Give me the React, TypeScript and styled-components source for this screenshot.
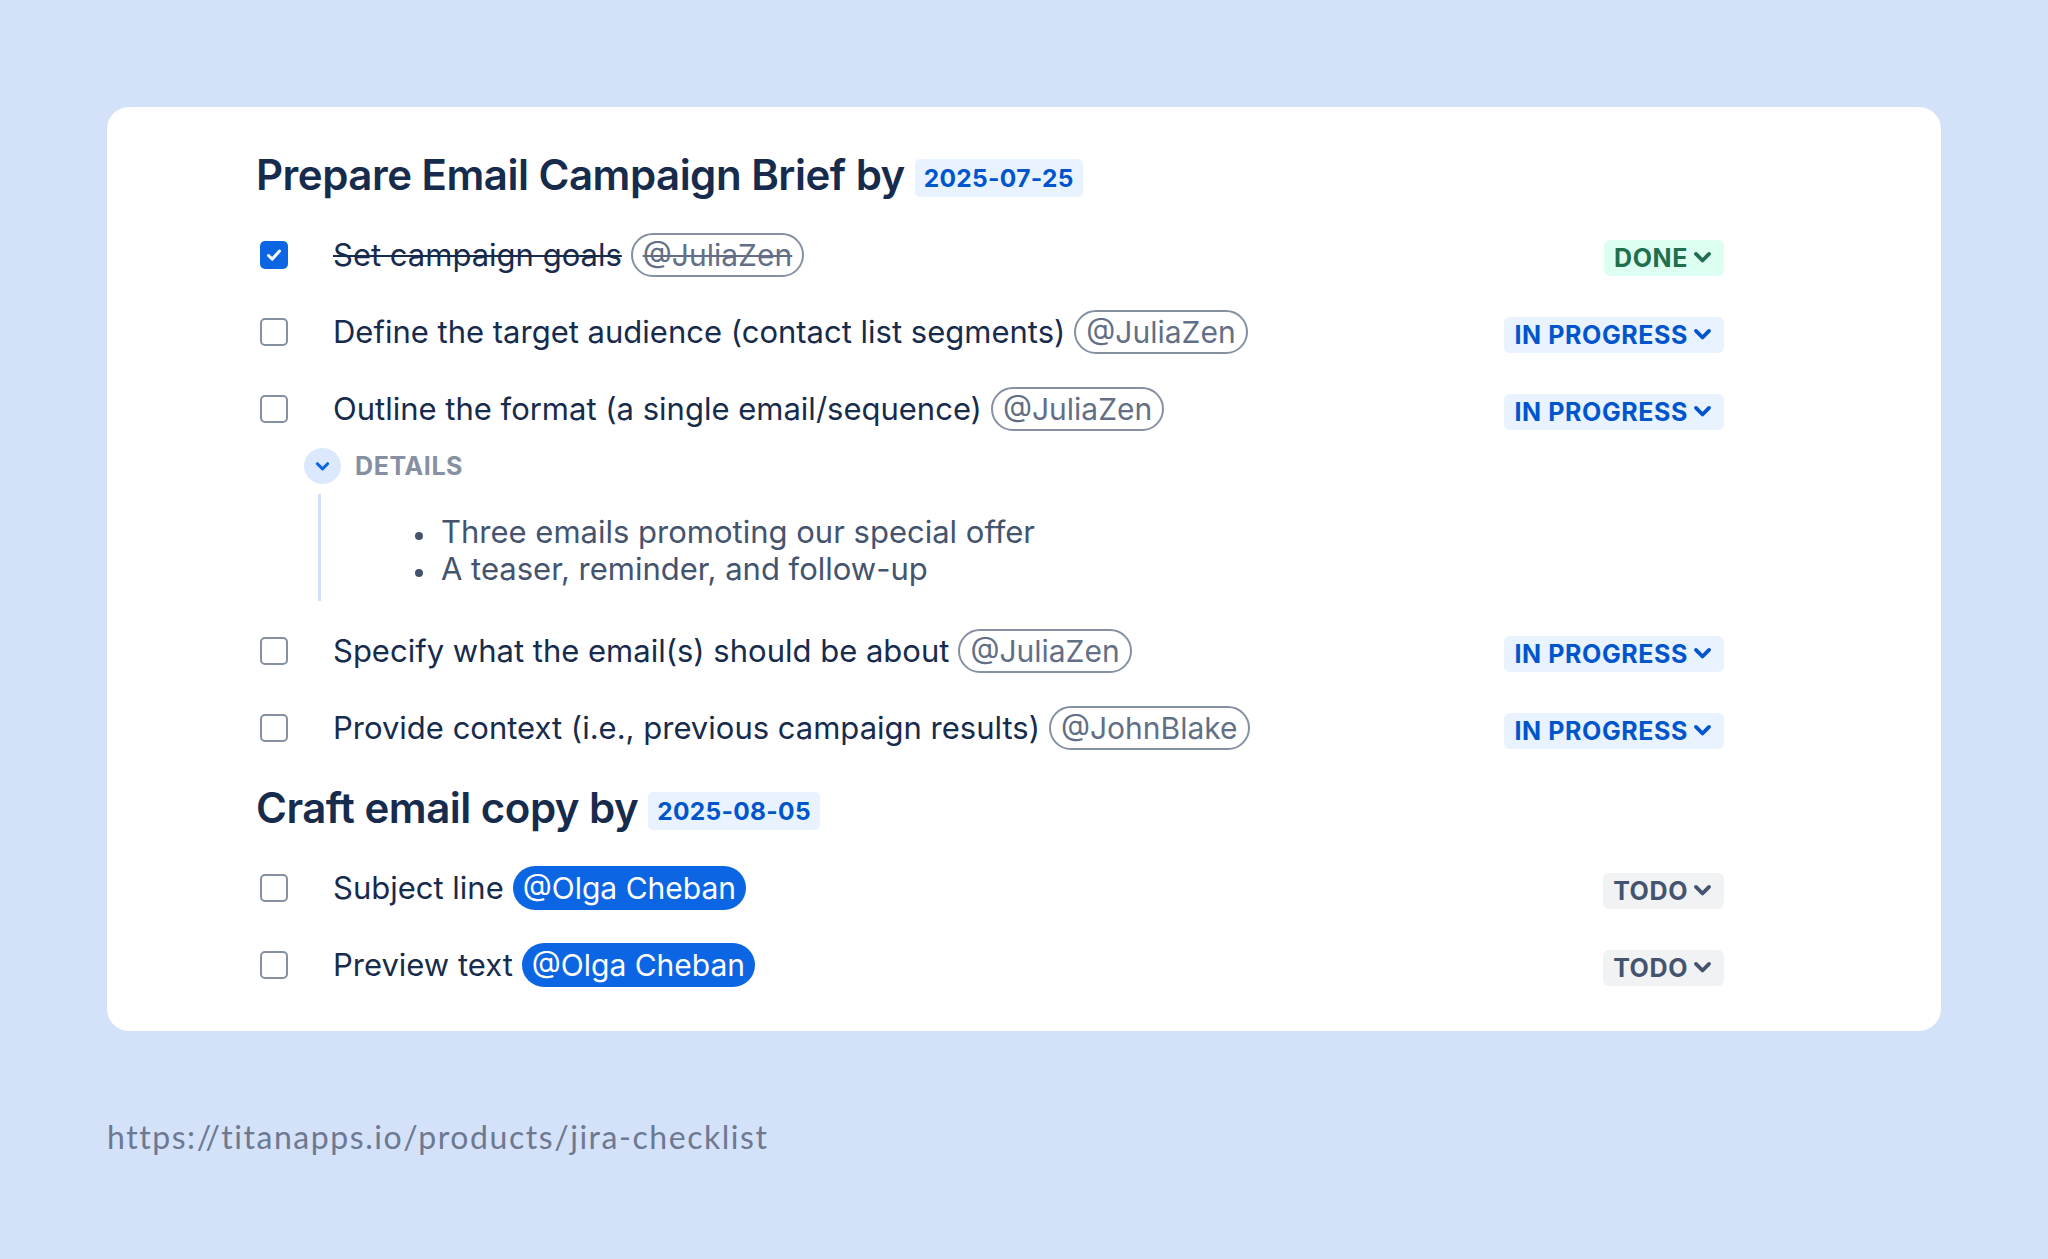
import React from 'react';
import styled, { createGlobalStyle } from 'styled-components';

const GlobalStyle = createGlobalStyle`
  html, body {
    margin: 0;
    padding: 0;
    background: #d3e2f8;
  }
  body {
    font-family: Inter, "Noto Sans", sans-serif;
    -webkit-font-smoothing: antialiased;
  }
`;

const Page = styled.div`
  min-height: 1259px;
  padding: 107px 107px 0 107px;
  box-sizing: border-box;
`;

const Card = styled.div`
  width: 1834px;
  box-sizing: border-box;
  background: #ffffff;
  border-radius: 22px;
  padding: 39px 217px 28px 149px;
  display: flex;
  flex-direction: column;
`;

const Heading = styled.h2<{ $first?: boolean }>`
  margin: ${(p) => (p.$first ? '0' : '13px')} 0 14px 0;
  height: 56px;
  display: flex;
  align-items: center;
  gap: 10px;
  font-size: 42px;
  font-weight: 600;
  letter-spacing: -0.5px;
  color: #172b4d;
`;

const DateLozenge = styled.span`
  display: inline-flex;
  align-items: center;
  height: 38px;
  padding: 0 9px;
  margin-top: 8px;
  border-radius: 5px;
  background: #e9f2ff;
  color: #0055cc;
  font-size: 24.5px;
  font-weight: 700;
  letter-spacing: 0.3px;
`;

const Row = styled.div`
  height: 77px;
  display: flex;
  align-items: center;
`;

const Box = styled.span<{ $checked?: boolean }>`
  flex: none;
  width: 28px;
  height: 28px;
  box-sizing: border-box;
  margin-left: 4px;
  margin-right: 45px;
  border-radius: 5px;
  display: flex;
  align-items: center;
  justify-content: center;
  border: ${(p) => (p.$checked ? 'none' : '2px solid #8590a2')};
  background: ${(p) => (p.$checked ? '#0c66e4' : '#ffffff')};
`;

const Label = styled.span<{ $done?: boolean }>`
  display: flex;
  align-items: center;
  gap: 9px;
  font-size: 31px;
  color: #172b4d;
  text-decoration: ${(p) => (p.$done ? 'line-through' : 'none')};
  text-decoration-thickness: 2px;
  white-space: nowrap;
`;

const Mention = styled.span<{ $self?: boolean; $done?: boolean }>`
  display: inline-flex;
  align-items: center;
  height: 44px;
  box-sizing: border-box;
  padding: 0 10px;
  border-radius: 22px;
  font-size: 30px;
  border: ${(p) => (p.$self ? 'none' : '2px solid #8590a2')};
  background: ${(p) => (p.$self ? '#0c66e4' : 'transparent')};
  color: ${(p) => (p.$self ? '#ffffff' : '#626f86')};
  text-decoration: ${(p) => (p.$done ? 'line-through' : 'none')};
  text-decoration-thickness: 2px;
`;

const statusColors = {
  done: { bg: '#dcfff1', fg: '#216e4e' },
  progress: { bg: '#e9f2ff', fg: '#0055cc' },
  todo: { bg: '#f1f2f4', fg: '#44546f' },
};

type StatusKind = keyof typeof statusColors;

const Status = styled.span<{ $kind: StatusKind }>`
  margin-left: auto;
  display: inline-flex;
  align-items: center;
  gap: 5px;
  height: 36px;
  padding: 0 12px 0 10px;
  border-radius: 6px;
  background: ${(p) => statusColors[p.$kind].bg};
  color: ${(p) => statusColors[p.$kind].fg};
  font-size: 25px;
  font-weight: 700;
  letter-spacing: 0.6px;
  margin-top: 6px;
`;

const Details = styled.div`
  margin-left: 48px;
  display: flex;
  flex-direction: column;
  margin-bottom: 11px;
`;

const DetailsHead = styled.div`
  height: 36px;
  display: flex;
  align-items: center;
  gap: 14px;
  margin-top: 1px;
  color: #8590a2;
  font-size: 25px;
  font-weight: 700;
  letter-spacing: 0.6px;
`;

const Toggle = styled.span`
  width: 37px;
  height: 36px;
  border-radius: 50%;
  background: #dbe8fd;
  display: flex;
  align-items: center;
  justify-content: center;
`;

const DetailsBody = styled.div`
  margin-top: 10px;
  margin-left: 14px;
  border-left: 3px solid #cfe1fd;
  padding: 19px 0 14px 0;
`;

const Bullets = styled.ul`
  margin: 0;
  padding-left: 116px;
  color: #44546f;
  font-size: 31px;
  line-height: 37px;
  li::marker {
    font-size: 24px;
  }
  li {
    padding-left: 4px;
  }
`;

const Url = styled.div`
  margin-top: 86px;
  font-family: Lato, "Open Sans", sans-serif;
  font-size: 32px;
  letter-spacing: 1.55px;
  color: #6e7891;
`;

const Chevron = ({ color, size = 16 }: { color: string; size?: number }) => (
  <svg width={size} height={size} viewBox="0 0 16 16" fill="none">
    <path d="M2.5 5l5.5 5.5L13.5 5" stroke={color} strokeWidth="3.2" strokeLinecap="round" strokeLinejoin="round" />
  </svg>
);

const Check = () => (
  <svg width="18" height="18" viewBox="0 0 18 18" fill="none">
    <path d="M3.5 9.5l3.8 3.6L14.5 5" stroke="#fff" strokeWidth="3" strokeLinecap="round" strokeLinejoin="round" />
  </svg>
);

const statusText: Record<StatusKind, string> = {
  done: 'DONE',
  progress: 'IN PROGRESS',
  todo: 'TODO',
};

type Item = {
  text: string;
  who: string;
  self?: boolean;
  status: StatusKind;
  done?: boolean;
  details?: string[];
};

const ItemRow = ({ item }: { item: Item }) => (
  <Row>
    <Box $checked={item.done}>{item.done && <Check />}</Box>
    <Label $done={item.done}>
      {item.text}
      <Mention $self={item.self} $done={item.done}>{item.who}</Mention>
    </Label>
    <Status $kind={item.status}>
      {statusText[item.status]}
      <Chevron color={statusColors[item.status].fg} size={19} />
    </Status>
  </Row>
);

const brief: Item[] = [
  { text: 'Set campaign goals', who: '@JuliaZen', status: 'done', done: true },
  { text: 'Define the target audience (contact list segments)', who: '@JuliaZen', status: 'progress' },
  {
    text: 'Outline the format (a single email/sequence)',
    who: '@JuliaZen',
    status: 'progress',
    details: ['Three emails promoting our special offer', 'A teaser, reminder, and follow-up'],
  },
  { text: 'Specify what the email(s) should be about', who: '@JuliaZen', status: 'progress' },
  { text: 'Provide context (i.e., previous campaign results)', who: '@JohnBlake', status: 'progress' },
];

const copy: Item[] = [
  { text: 'Subject line', who: '@Olga Cheban', self: true, status: 'todo' },
  { text: 'Preview text', who: '@Olga Cheban', self: true, status: 'todo' },
];

const renderItems = (items: Item[]) =>
  items.map((item) => (
    <React.Fragment key={item.text}>
      <ItemRow item={item} />
      {item.details && (
        <Details>
          <DetailsHead>
            <Toggle>
              <Chevron color="#0c66e4" size={15} />
            </Toggle>
            DETAILS
          </DetailsHead>
          <DetailsBody>
            <Bullets>
              {item.details.map((d) => (
                <li key={d}>{d}</li>
              ))}
            </Bullets>
          </DetailsBody>
        </Details>
      )}
    </React.Fragment>
  ));

export default function App() {
  return (
    <Page>
      <GlobalStyle />
      <Card>
        <Heading $first>
          Prepare Email Campaign Brief by <DateLozenge>2025-07-25</DateLozenge>
        </Heading>
        {renderItems(brief)}
        <Heading>
          Craft email copy by <DateLozenge>2025-08-05</DateLozenge>
        </Heading>
        {renderItems(copy)}
      </Card>
      <Url>https://titanapps.io/products/jira-checklist</Url>
    </Page>
  );
}
